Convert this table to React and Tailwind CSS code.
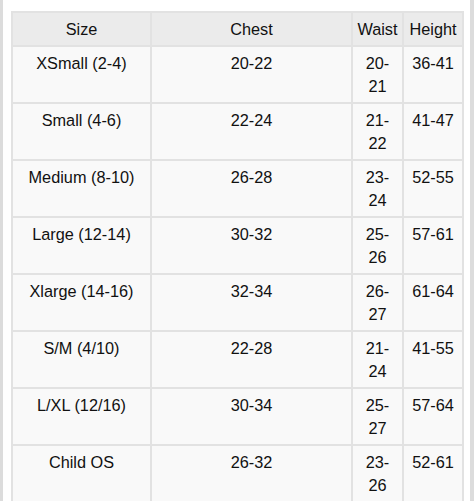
const ROWS = [
  { size: "XSmall (2-4)", chest: "20-22", waist: ["20-", "21"], height: "36-41" },
  { size: "Small (4-6)", chest: "22-24", waist: ["21-", "22"], height: "41-47" },
  { size: "Medium (8-10)", chest: "26-28", waist: ["23-", "24"], height: "52-55" },
  { size: "Large (12-14)", chest: "30-32", waist: ["25-", "26"], height: "57-61" },
  { size: "Xlarge (14-16)", chest: "32-34", waist: ["26-", "27"], height: "61-64" },
  { size: "S/M (4/10)", chest: "22-28", waist: ["21-", "24"], height: "41-55" },
  { size: "L/XL (12/16)", chest: "30-34", waist: ["25-", "27"], height: "57-64" },
  { size: "Child OS", chest: "26-32", waist: ["23-", "26"], height: "52-61" },
];

export default function App() {
  return (
    <div
      className="flex w-[474px] h-[501px] overflow-hidden bg-white text-[#111] text-[16.3px]"
      style={{ fontFamily: '"Liberation Sans", Arial, sans-serif' }}
    >
      <div className="w-[3px] shrink-0 bg-[#dcdcdc]" />
      <div className="flex-1 pl-[8px] pt-[11px]">
        <table className="table-fixed border-collapse w-[451px]">
          <colgroup>
            <col className="w-[139px]" />
            <col className="w-[201px]" />
            <col className="w-[51px]" />
            <col className="w-[60px]" />
          </colgroup>
          <thead>
            <tr className="h-[34px] bg-[#ebebeb]">
              <th className="font-normal text-center border-2 border-[#e2e2e2] leading-[23px]">Size</th>
              <th className="font-normal text-center border-2 border-[#e2e2e2] leading-[23px]">Chest</th>
              <th className="font-normal text-center border-2 border-[#e2e2e2] leading-[23px]">Waist</th>
              <th className="font-normal text-center border-2 border-[#e2e2e2] leading-[23px]">Height</th>
            </tr>
          </thead>
          <tbody>
            {ROWS.map((r) => (
              <tr key={r.size} className="h-[57px] bg-[#f9f9f9]">
                <td className="align-top text-center pt-[5px] leading-[23px] border-2 border-[#e2e2e2]">{r.size}</td>
                <td className="align-top text-center pt-[5px] leading-[23px] border-2 border-[#e2e2e2]">{r.chest}</td>
                <td className="align-top text-center pt-[5px] leading-[23px] border-2 border-[#e2e2e2]">
                  {r.waist[0]}
                  <br />
                  {r.waist[1]}
                </td>
                <td className="align-top text-center pt-[5px] leading-[23px] border-2 border-[#e2e2e2]">{r.height}</td>
              </tr>
            ))}
          </tbody>
        </table>
      </div>
      <div className="w-[4px] shrink-0 bg-[#dcdcdc]" />
    </div>
  );
}
